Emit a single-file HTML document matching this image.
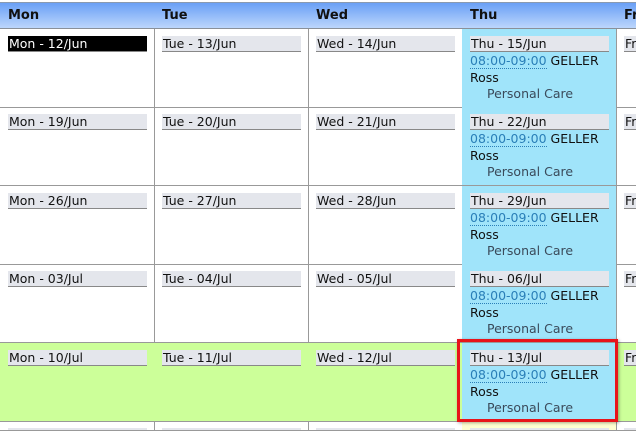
<!DOCTYPE html>
<html style="width:636px;height:431px;overflow:hidden"><head><style>
*{margin:0;padding:0;box-sizing:border-box}
body{width:636px;height:431px;overflow:hidden;background:#fff;font-family:"DejaVu Sans","Liberation Sans",sans-serif;font-size:12.5px;color:#111;position:relative}
.h{position:absolute;top:2px;height:27px;border-top:1px solid #8a9ab0;border-right:1px solid #8a9099;border-bottom:1px solid #8a9099;background:linear-gradient(#6aa0f6,#bcd6fc);font-weight:bold;font-size:13px;padding:5px 0 0 8px;color:#111;overflow:hidden;white-space:nowrap}
.c{position:absolute;height:79px;border-right:1px solid #999;border-bottom:1px solid #999;overflow:hidden}
.l{position:absolute;left:8px;top:7px;width:139px;height:16px;background:#e4e6ec;border-bottom:1px solid #888;padding-left:1px;line-height:15px;white-space:nowrap;overflow:hidden}
.t{position:absolute;left:8px;top:24px;line-height:16.5px;white-space:nowrap}
.t a{color:#2a7fb8;text-decoration:none;border-bottom:1px dotted #2a7fb8}
.p{padding-left:17px;color:#3a4a5a}
.f{width:20px;border-right:none}
</style></head><body>
<div class="h" style="left:0;width:155px">Mon</div>
<div class="h" style="left:154px;width:155px">Tue</div>
<div class="h" style="left:308px;width:155px">Wed</div>
<div class="h" style="left:462px;width:155px">Thu</div>
<div class="h" style="left:616px;width:20px;border-right:none">Fri</div>

<div class="c" style="left:0;top:29px;width:155px"><div class="l" style="background:#000;color:#fff">Mon - 12/Jun</div></div>
<div class="c" style="left:154px;top:29px;width:155px"><div class="l">Tue - 13/Jun</div></div>
<div class="c" style="left:308px;top:29px;width:155px"><div class="l">Wed - 14/Jun</div></div>
<div class="c" style="left:462px;top:29px;width:155px;background:#a0e4fa"><div class="l">Thu - 15/Jun</div><div class="t"><a>08:00-09:00</a> GELLER<br>Ross<br><span class="p">Personal Care</span></div></div>
<div class="c f" style="left:616px;top:29px"><div class="l">Fri - 16/Jun</div></div>

<div class="c" style="left:0;top:107px;width:155px"><div class="l">Mon - 19/Jun</div></div>
<div class="c" style="left:154px;top:107px;width:155px"><div class="l">Tue - 20/Jun</div></div>
<div class="c" style="left:308px;top:107px;width:155px"><div class="l">Wed - 21/Jun</div></div>
<div class="c" style="left:462px;top:107px;width:155px;background:#a0e4fa"><div class="l">Thu - 22/Jun</div><div class="t"><a>08:00-09:00</a> GELLER<br>Ross<br><span class="p">Personal Care</span></div></div>
<div class="c f" style="left:616px;top:107px"><div class="l">Fri - 23/Jun</div></div>

<div class="c" style="left:0;top:186px;width:155px"><div class="l">Mon - 26/Jun</div></div>
<div class="c" style="left:154px;top:186px;width:155px"><div class="l">Tue - 27/Jun</div></div>
<div class="c" style="left:308px;top:186px;width:155px"><div class="l">Wed - 28/Jun</div></div>
<div class="c" style="left:462px;top:186px;width:155px;background:#a0e4fa"><div class="l">Thu - 29/Jun</div><div class="t"><a>08:00-09:00</a> GELLER<br>Ross<br><span class="p">Personal Care</span></div></div>
<div class="c f" style="left:616px;top:186px"><div class="l">Fri - 30/Jun</div></div>

<div class="c" style="left:0;top:264px;width:155px"><div class="l">Mon - 03/Jul</div></div>
<div class="c" style="left:154px;top:264px;width:155px"><div class="l">Tue - 04/Jul</div></div>
<div class="c" style="left:308px;top:264px;width:155px"><div class="l">Wed - 05/Jul</div></div>
<div class="c" style="left:462px;top:264px;width:155px;background:#a0e4fa"><div class="l">Thu - 06/Jul</div><div class="t"><a>08:00-09:00</a> GELLER<br>Ross<br><span class="p">Personal Care</span></div></div>
<div class="c f" style="left:616px;top:264px"><div class="l">Fri - 07/Jul</div></div>

<div class="c" style="left:0;top:343px;width:155px;background:#ccff99"><div class="l">Mon - 10/Jul</div></div>
<div class="c" style="left:154px;top:343px;width:155px;background:#ccff99"><div class="l">Tue - 11/Jul</div></div>
<div class="c" style="left:308px;top:343px;width:155px;background:#ccff99"><div class="l">Wed - 12/Jul</div></div>
<div class="c" style="left:462px;top:343px;width:155px;background:#a0e4fa"><div class="l">Thu - 13/Jul</div><div class="t"><a>08:00-09:00</a> GELLER<br>Ross<br><span class="p">Personal Care</span></div></div>
<div class="c f" style="left:616px;top:343px;background:#ccff99"><div class="l">Fri - 14/Jul</div></div>

<div class="c" style="left:0;top:421px;width:155px;height:10px"><div class="l">Mon - 17/Jul</div></div>
<div class="c" style="left:154px;top:421px;width:155px;height:10px"><div class="l">Tue - 18/Jul</div></div>
<div class="c" style="left:308px;top:421px;width:155px;height:10px"><div class="l">Wed - 19/Jul</div></div>
<div class="c" style="left:462px;top:421px;width:155px;height:10px;background:#ffffd0"><div class="l">Thu - 20/Jul</div></div>
<div class="c f" style="left:616px;top:421px;height:10px"><div class="l">Fri - 21/Jul</div></div>

<div style="position:absolute;left:457px;top:339px;width:161px;height:83px;border:3px solid #e8141a;box-shadow:1px 1px 3px rgba(0,0,0,.35)"></div>
</body></html>
